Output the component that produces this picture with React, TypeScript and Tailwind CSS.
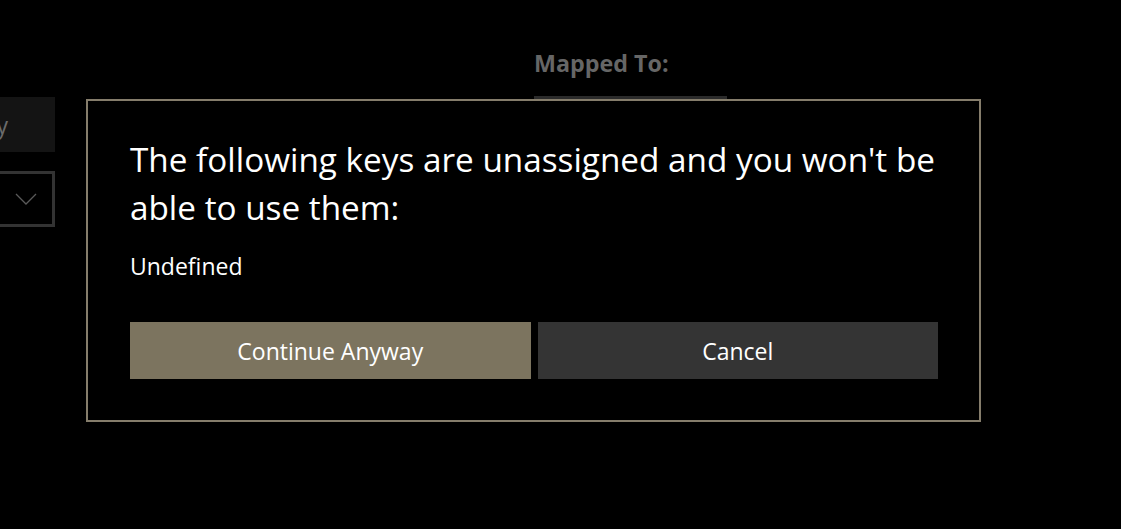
import React from 'react';

const FONT = "font-['Open_Sans','Noto_Sans',sans-serif]";

export default function App() {
  return (
    <div className={`relative w-[1121px] h-[529px] overflow-hidden bg-black ${FONT}`}>
      {/* Page behind the dialog */}
      <div className="flex">
        <div className="w-[55px] flex flex-col">
          <div className="mt-[97px] h-[55px] bg-[#141414] flex items-center justify-end pr-[47px] overflow-hidden">
            <span className="text-[23px] leading-[32px] text-[#6b6b6b] whitespace-nowrap">Key</span>
          </div>
          <div className="mt-[19px] h-[56px] border-[3px] border-l-0 border-[#333333] flex items-center justify-end pr-[15px]">
            <svg width="22" height="12" viewBox="0 0 22 12" fill="none">
              <path d="M1 1 L11 11 L21 1" stroke="#5a5a5a" strokeWidth="1.3" />
            </svg>
          </div>
        </div>
        <div className="ml-[479px] flex flex-col pt-[47px]">
          <div className="text-[23.3px] leading-[32px] font-bold text-[#666666]">Mapped To:</div>
          <div className="mt-[17px] w-[193px] h-[55px] border-[3px] border-[#2b2b2b] bg-[#141414]" />
        </div>
      </div>

      {/* Dialog */}
      <div className="absolute left-[86px] top-[99px] w-[895px] border-2 border-[#857d6b] bg-black pl-[42px] pr-[41px] pt-[34px] pb-[41px]">
        <h2 className="text-[33.3px] leading-[48px] text-white font-normal">
          The following keys are unassigned and you won't be able to use them:
        </h2>
        <p className="mt-[19px] text-[23px] leading-[32px] text-white">Undefined</p>
        <div className="mt-[40px] flex gap-[7px]">
          <button className="flex-1 h-[57px] bg-[#7c745f] text-white text-[23px] leading-[32px]">
            Continue Anyway
          </button>
          <button className="flex-1 h-[57px] bg-[#343434] text-white text-[23px] leading-[32px]">
            Cancel
          </button>
        </div>
      </div>
    </div>
  );
}
